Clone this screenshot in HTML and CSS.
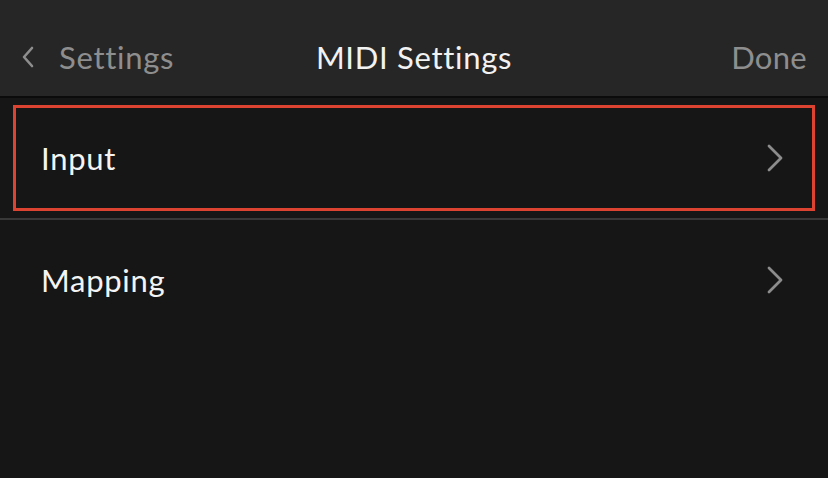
FILE: index.html
```html
<!DOCTYPE html>
<html>
<head>
<meta charset="utf-8">
<link rel="stylesheet" href="styles.css">
</head>
<body>
<header class="nav">
  <div class="nav-back">
    <svg class="back-chev" width="14" height="22" viewBox="0 0 14 22"><path d="M11 2 L3 11 L11 20" fill="none" stroke="#8e8e8e" stroke-width="2.6" stroke-linecap="round" stroke-linejoin="round"/></svg>
    <span>Settings</span>
  </div>
  <div class="nav-title">MIDI Settings</div>
  <div class="nav-done">Done</div>
</header>
<main class="list">
  <div class="row row-first">
    <div class="row-inner focused">
      <span class="label">Input</span>
      <svg class="chev" width="18" height="30" viewBox="0 0 18 30"><path d="M3 3 L15 15 L3 27" fill="none" stroke="#8c8c8c" stroke-width="2.8" stroke-linecap="round" stroke-linejoin="round"/></svg>
    </div>
  </div>
  <div class="row">
    <div class="row-inner">
      <span class="label">Mapping</span>
      <svg class="chev" width="18" height="30" viewBox="0 0 18 30"><path d="M3 3 L15 15 L3 27" fill="none" stroke="#8c8c8c" stroke-width="2.8" stroke-linecap="round" stroke-linejoin="round"/></svg>
    </div>
  </div>
</main>
</body>
</html>
```

FILE: styles.css
```css
html, body {
  margin: 0;
  padding: 0;
  background: #161616;
  height: 100%;
}
body {
  font-family: Lato, "Open Sans", sans-serif;
  letter-spacing: 0.7px;
  -webkit-font-smoothing: antialiased;
}
.nav {
  display: grid;
  grid-template-columns: 1fr auto 1fr;
  align-items: center;
  height: 96px;
  background: #262626;
  border-bottom: 2px solid #0b0b0b;
  padding: 0 21px 0 21px;
  box-sizing: content-box;
}
.nav-back {
  display: flex;
  align-items: center;
  gap: 24px;
  color: #8e8e8e;
  font-size: 31px;
  padding-top: 18px;
}
.back-chev {
  display: block;
}
.nav-title {
  color: #f2f2f2;
  font-size: 31px;
  padding-top: 18px;
  text-align: center;
}
.nav-done {
  color: #8e8e8e;
  font-size: 31px;
  text-align: right;
  padding-top: 18px;
  letter-spacing: 0.3px;
}
.row {
  height: 120px;
  padding: 7px 13px 7px 13px;
  box-sizing: border-box;
}
.row-first {
  border-bottom: 2px solid #383838;
  height: 122px;
}
.row-inner {
  height: 100%;
  box-sizing: border-box;
  display: flex;
  align-items: center;
  justify-content: space-between;
  padding: 0 28px 0 25px;
  border: 3px solid transparent;
}
.focused {
  border-color: #dc4330;
}
.label {
  color: #f4f4f4;
  font-size: 31px;
}
.chev {
  display: block;
}
```
